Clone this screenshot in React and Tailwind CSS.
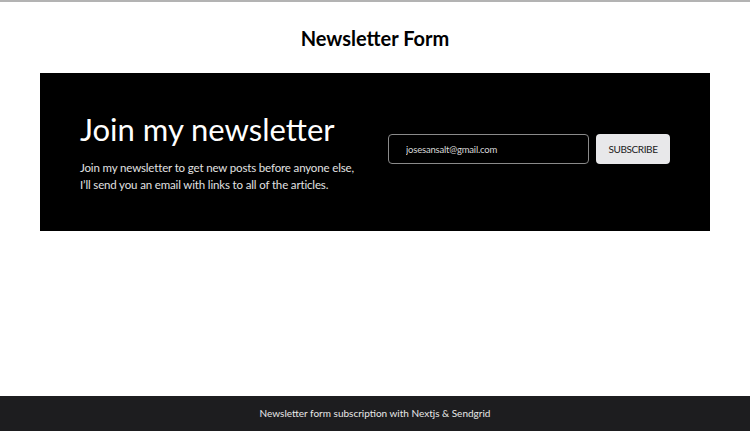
export default function App() {
  return (
    <div className="flex min-h-[431px] flex-col bg-white font-['Lato',sans-serif]">
      <div className="h-[2px] bg-[#b3b3b3]" />
      <main className="flex-1 px-10">
        <h1 className="pt-[22px] pb-[21px] text-center text-[20px] font-bold leading-[28px] text-black">
          Newsletter Form
        </h1>
        <section className="flex h-[158px] items-center justify-between bg-black pl-10 pr-10">
          <div className="pb-[2px] whitespace-nowrap">
            <h2 className="text-[31px] leading-[40px] text-white">Join my newsletter</h2>
            <p className="mt-[10px] text-[11.5px] leading-[17px] tracking-[-0.15px] text-[#e2e2e2]">
              Join my newsletter to get new posts before anyone else,
              <br />
              I’ll send you an email with links to all of the articles.
            </p>
          </div>
          <form className="flex items-center gap-[7px] pb-[6px]" onSubmit={(e) => e.preventDefault()}>
            <input
              type="email"
              defaultValue="josesansalt@gmail.com"
              className="h-[30px] w-[201px] rounded-[4px] border border-[#8a8a8a] bg-black px-[17px] text-[9.5px] tracking-[-0.2px] text-[#d8d8d8] outline-none"
            />
            <button
              type="submit"
              className="h-[30px] w-[74px] rounded-[4px] bg-[#e8e8ea] text-[10px] tracking-[-0.4px] text-[#1a1a1a]"
            >
              SUBSCRIBE
            </button>
          </form>
        </section>
      </main>
      <footer className="flex h-[35px] items-center justify-center bg-[#1d1d1f] text-[10px] text-[#e8e8e8]">
        Newsletter form subscription with Nextjs &amp; Sendgrid
      </footer>
    </div>
  );
}
